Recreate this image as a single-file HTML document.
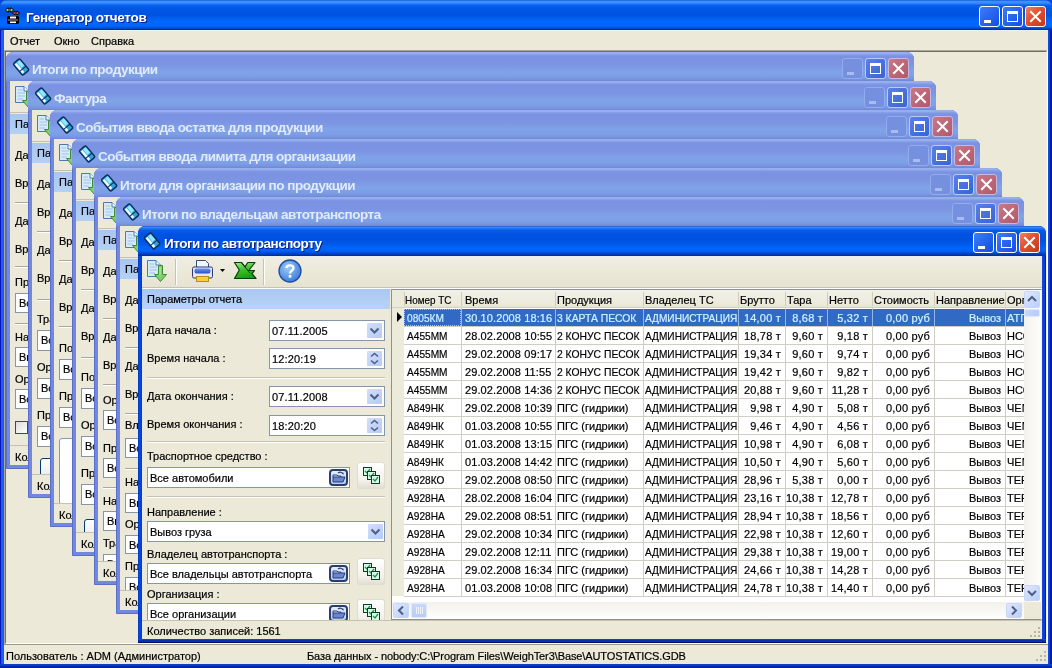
<!DOCTYPE html><html><head><meta charset="utf-8"><title>Генератор отчетов</title><style>
*{box-sizing:border-box;margin:0;padding:0}
html,body{will-change:transform;width:1052px;height:668px;overflow:hidden;background:#ECE9D8;font-family:"Liberation Sans", sans-serif;font-size:11px;color:#000}
.a{position:absolute}
.t{position:absolute;white-space:nowrap;line-height:13px;-webkit-text-stroke:0.2px currentColor}
.fld{position:absolute;background:#fff;border:1px solid #8496A8;overflow:hidden}
.sep{position:absolute;height:2px;border-top:1px solid #ACA899;border-bottom:1px solid #fff}
.tb{position:absolute;border-radius:3px;border:1px solid #fff;width:21px;height:21px}
.cap{position:absolute;white-space:nowrap;font-weight:bold;font-size:13px;line-height:16px;color:#fff}
</style></head><body>
<div class="a" style="left:0;top:0;width:1052px;height:668px;background:#0846D8"></div>
<div class="a" style="left:0;top:0;width:1052px;height:30px;border-radius:7px 7px 0 0;background:linear-gradient(to bottom,#0A4AC8 0px,#3A92FF 1px,#3A8EFF 3px,#0A64F0 5px,#0058E6 8px,#0052E0 15px,#005EEE 18px,#0068FF 22px,#0066FC 26px,#0050DC 28px,#0030A8 29.5px,#002A98 30px)"></div>
<div class="a" style="left:0;top:30px;width:4px;height:638px;background:linear-gradient(to right,#0818B8 0px,#0818B8 1px,#1A5CFA 1px,#1A5CFA 3px,#2A58D0 3px)"></div>
<div class="a" style="left:1048px;top:30px;width:4px;height:638px;background:linear-gradient(to right,#0A48E0 0px,#0A48E0 2px,#0418A0 2px)"></div>
<div class="a" style="left:0;top:664px;width:1052px;height:4px;background:linear-gradient(to bottom,#0840C8 0px,#0840C8 2px,#0424A8 2px)"></div>
<svg class="a" style="left:5px;top:6px" width="16" height="18" viewBox="0 0 16 18">
<path d="M0.5 4 L3 1.5 V3 H6 V1.5 L8.5 4 L6 6.5 V5 H3 V6.5 Z" fill="#8CE070" stroke="#000" stroke-width="1"/>
<path d="M7.5 7 L9.5 5 V6 H12 V5 L14.5 7 L12 9 V8 H9.5 V9 Z" fill="#F05050" stroke="#000" stroke-width="1"/>
<path d="M3 10 H13 L14 11 V17 L13 18 H3 L2 17 V11 Z" fill="#000"/>
<rect x="5" y="10.5" width="6" height="2" fill="#fff"/>
<rect x="3" y="13.5" width="10" height="1" fill="#B89898"/>
<rect x="5" y="15.5" width="6" height="1.6" fill="#fff"/>
</svg>
<div class="cap" style="left:26px;top:10px;font-size:13.5px;letter-spacing:-0.28px;text-shadow:1px 1px 0 #0A1E80">Генератор отчетов</div>
<div class="tb" style="left:979px;top:6px;background:linear-gradient(135deg,#3C7EF8 0%,#2A66F0 45%,#1050E0 100%);border-color:#fff"><div class="a" style="left:4px;top:13px;width:7px;height:3px;background:#fff"></div></div><div class="tb" style="left:1002px;top:6px;background:linear-gradient(135deg,#3C7EF8 0%,#2A66F0 45%,#1050E0 100%);border-color:#fff"><div class="a" style="left:4px;top:4px;width:11px;height:11px;border:1px solid #fff;border-top-width:3px"></div></div><div class="tb" style="left:1025px;top:6px;background:linear-gradient(135deg,#F08060 0%,#E05030 45%,#C83818 100%);border-color:#fff"><svg class="a" style="left:0;top:0" width="19" height="19"><path d="M5 5 L14 14 M14 5 L5 14" stroke="#fff" stroke-width="2" stroke-linecap="square"/></svg></div>
<div class="a" style="left:4px;top:30px;width:1044px;height:20px;background:linear-gradient(#EEF2F8 0px,#EEF2F8 1px,#ECE9D8 1px)"></div>
<div class="t" style="left:10px;top:35px">Отчет</div>
<div class="t" style="left:54px;top:35px">Окно</div>
<div class="t" style="left:91px;top:35px">Справка</div>
<div class="a" style="left:4px;top:50px;width:1044px;height:595px;background:#ECE9D8;border-top:1px solid #ACA899;border-left:1px solid #ACA899;border-right:2px solid #fff;border-bottom:1px solid #fff"></div>
<div class="a" style="left:5px;top:51px;width:1042px;height:593px;border-top:1px solid #716F64;border-left:1px solid #716F64;border-right:1px solid #F1EFE2;border-bottom:1px solid #FFFFFF"></div>
<div class="a" style="left:4px;top:644px;width:1044px;height:20px;background:#ECE9D8;border-top:1px solid #9C9884"></div>
<div class="t" style="left:6px;top:650px">Пользователь : ADM (Администратор)</div>
<div class="t" style="left:307px;top:650px;letter-spacing:-0.1px">База данных - nobody:C:\Program Files\WeighTer3\Base\AUTOSTATICS.GDB</div>
<div class="a" style="left:1044px;top:651px;width:2px;height:2px;background:#B8B5A6"></div><div class="a" style="left:1040px;top:655px;width:2px;height:2px;background:#B8B5A6"></div><div class="a" style="left:1044px;top:655px;width:2px;height:2px;background:#B8B5A6"></div><div class="a" style="left:1036px;top:659px;width:2px;height:2px;background:#B8B5A6"></div><div class="a" style="left:1040px;top:659px;width:2px;height:2px;background:#B8B5A6"></div><div class="a" style="left:1044px;top:659px;width:2px;height:2px;background:#B8B5A6"></div>
<div class="a" style="left:6px;top:52px;width:908px;height:417px;overflow:hidden">
<div class="a" style="left:0;top:0;width:908px;height:417px;background:#7288E0;border-radius:7px 7px 0 0;border:1px solid #5A70C8"></div>
<div class="a" style="left:0;top:0;width:908px;height:30px;border-radius:7px 7px 0 0;background:linear-gradient(to bottom,#8CA6EC 0px,#9DB9F0 1px,#8CA4EA 2px,#7B92E2 4px,#7C94E2 12px,#7FA2E8 19px,#7CA0E6 24px,#7A94E0 27px,#6E88D4 29px)"></div>
<svg class="a" style="left:6px;top:6px" width="18" height="18" viewBox="0 0 18 18">
<g transform="rotate(-40 9 9)">
<rect x="4.8" y="1.5" width="8.6" height="15" rx="1.5" fill="#30A4D8" stroke="#0E2A5A" stroke-width="1.4"/>
<rect x="5.8" y="3" width="2.4" height="12" fill="#F0FCFF"/>
<rect x="8.8" y="3" width="3.6" height="7" fill="#90E6FA"/>
<path d="M4.8 11.5 H13.4" stroke="#0E2A5A" stroke-width="1.1"/>
</g></svg>
<div class="cap" style="left:26px;top:10px;font-size:13.5px;letter-spacing:-0.5px;color:#E2EAFB">Итоги по продукции</div>
<div class="tb" style="left:836px;top:6px;background:#7690E0;border-color:#93ACEE"><div class="a" style="left:4px;top:13px;width:7px;height:3px;background:#A8BCF0"></div></div><div class="tb" style="left:859px;top:6px;background:linear-gradient(135deg,#5A80E8,#3A62D8);border-color:#B8CCF8"><div class="a" style="left:4px;top:4px;width:11px;height:11px;border:1px solid #fff;border-top-width:3px"></div></div><div class="tb" style="left:882px;top:6px;background:linear-gradient(135deg,#C87888,#B05868);border-color:#C8B8E0"><svg class="a" style="left:0;top:0" width="19" height="19"><path d="M5 5 L14 14 M14 5 L5 14" stroke="#fff" stroke-width="2" stroke-linecap="square"/></svg></div>
<div class="a" style="left:4px;top:29px;width:900px;height:384px;background:#ECE9D8;overflow:hidden">
<svg class="a" style="left:4px;top:4px" width="24" height="25" viewBox="0 0 24 25">
<path d="M1.5 1.5 H10 L14.5 6 V17.5 H1.5 Z" fill="#D8EAFA" stroke="#4A7AB0"/>
<path d="M10 1.5 V6 H14.5" fill="#F4FAFF" stroke="#4A7AB0"/>
<path d="M3.5 5 H8 M3.5 8 H11 M3.5 11 H11 M3.5 14 H9" stroke="#9CC4E8"/>
<path d="M12.5 6.5 H16.5 V15.5 H20.5 L14.5 22.5 L8.5 15.5 H12.5 Z" fill="#80D070" stroke="#3C8A34"/>
</svg><div class="a" style="left:0px;top:31px;width:248px;height:1px;background:#C5C2B2"></div><div class="a" style="left:0px;top:33px;width:248px;height:20px;background:linear-gradient(#A8C6F0,#B4D0F4)"></div><div class="t" style="left:5px;top:37px">Параметры отчета</div><div class="t" style="left:5px;top:67.5px">Дата начала :</div><div class="fld" style="left:127px;top:64px;width:116px;height:21px"><div class=t style=left:3px;top:3px>07.11.2005</div></div><div class="t" style="left:5px;top:95.5px">Время начала :</div><div class="fld" style="left:127px;top:92px;width:116px;height:20px"><div class=t style=left:3px;top:3px>12:20:19</div></div><div class="sep" style="left:5px;top:121px;width:239px"></div><div class="t" style="left:5px;top:133.5px">Дата окончания :</div><div class="fld" style="left:127px;top:130px;width:116px;height:21px"><div class=t style=left:3px;top:3px>07.11.2008</div></div><div class="t" style="left:5px;top:162px">Время окончания :</div><div class="fld" style="left:127px;top:159px;width:116px;height:20px"><div class=t style=left:3px;top:3px>18:20:20</div></div><div class="sep" style="left:5px;top:185px;width:239px"></div><div class="t" style="left:5px;top:195px">Продукция :</div><div class="fld" style="left:5px;top:212px;width:202px;height:20px"><div class=t style=left:3px;top:3px>Все</div></div><div class="sep" style="left:5px;top:242px;width:239px"></div><div class="t" style="left:5px;top:250px">Направление :</div><div class="fld" style="left:5px;top:266px;width:202px;height:20px"><div class=t style=left:3px;top:3px>Вывоз груза</div></div><div class="t" style="left:5px;top:292px">Организация :</div><div class="fld" style="left:5px;top:308px;width:202px;height:20px"><div class=t style=left:3px;top:3px>Все</div></div><div class="a" style="left:5px;top:340px;width:13px;height:13px;border:1px solid #1C5180;background:linear-gradient(135deg,#DCDCD7,#fff)"></div>
<div class="a" style="left:0;top:364px;width:900px;height:20px;background:#ECE9D8;border-top:1px solid #C5C2B2"></div>
<div class="t" style="left:5px;top:370px">Количество записей: 1561</div>
</div>
</div>
<div class="a" style="left:28px;top:81px;width:908px;height:417px;overflow:hidden">
<div class="a" style="left:0;top:0;width:908px;height:417px;background:#7288E0;border-radius:7px 7px 0 0;border:1px solid #5A70C8"></div>
<div class="a" style="left:0;top:0;width:908px;height:30px;border-radius:7px 7px 0 0;background:linear-gradient(to bottom,#8CA6EC 0px,#9DB9F0 1px,#8CA4EA 2px,#7B92E2 4px,#7C94E2 12px,#7FA2E8 19px,#7CA0E6 24px,#7A94E0 27px,#6E88D4 29px)"></div>
<svg class="a" style="left:6px;top:6px" width="18" height="18" viewBox="0 0 18 18">
<g transform="rotate(-40 9 9)">
<rect x="4.8" y="1.5" width="8.6" height="15" rx="1.5" fill="#30A4D8" stroke="#0E2A5A" stroke-width="1.4"/>
<rect x="5.8" y="3" width="2.4" height="12" fill="#F0FCFF"/>
<rect x="8.8" y="3" width="3.6" height="7" fill="#90E6FA"/>
<path d="M4.8 11.5 H13.4" stroke="#0E2A5A" stroke-width="1.1"/>
</g></svg>
<div class="cap" style="left:26px;top:10px;font-size:13.5px;letter-spacing:-0.5px;color:#E2EAFB">Фактура</div>
<div class="tb" style="left:836px;top:6px;background:#7690E0;border-color:#93ACEE"><div class="a" style="left:4px;top:13px;width:7px;height:3px;background:#A8BCF0"></div></div><div class="tb" style="left:859px;top:6px;background:linear-gradient(135deg,#5A80E8,#3A62D8);border-color:#B8CCF8"><div class="a" style="left:4px;top:4px;width:11px;height:11px;border:1px solid #fff;border-top-width:3px"></div></div><div class="tb" style="left:882px;top:6px;background:linear-gradient(135deg,#C87888,#B05868);border-color:#C8B8E0"><svg class="a" style="left:0;top:0" width="19" height="19"><path d="M5 5 L14 14 M14 5 L5 14" stroke="#fff" stroke-width="2" stroke-linecap="square"/></svg></div>
<div class="a" style="left:4px;top:29px;width:900px;height:384px;background:#ECE9D8;overflow:hidden">
<svg class="a" style="left:4px;top:4px" width="24" height="25" viewBox="0 0 24 25">
<path d="M1.5 1.5 H10 L14.5 6 V17.5 H1.5 Z" fill="#D8EAFA" stroke="#4A7AB0"/>
<path d="M10 1.5 V6 H14.5" fill="#F4FAFF" stroke="#4A7AB0"/>
<path d="M3.5 5 H8 M3.5 8 H11 M3.5 11 H11 M3.5 14 H9" stroke="#9CC4E8"/>
<path d="M12.5 6.5 H16.5 V15.5 H20.5 L14.5 22.5 L8.5 15.5 H12.5 Z" fill="#80D070" stroke="#3C8A34"/>
</svg><div class="a" style="left:0px;top:31px;width:248px;height:1px;background:#C5C2B2"></div><div class="a" style="left:0px;top:33px;width:248px;height:20px;background:linear-gradient(#A8C6F0,#B4D0F4)"></div><div class="t" style="left:5px;top:37px">Параметры отчета</div><div class="t" style="left:5px;top:67.5px">Дата начала :</div><div class="fld" style="left:127px;top:64px;width:116px;height:21px"><div class=t style=left:3px;top:3px>07.11.2005</div></div><div class="t" style="left:5px;top:95.5px">Время начала :</div><div class="fld" style="left:127px;top:92px;width:116px;height:20px"><div class=t style=left:3px;top:3px>12:20:19</div></div><div class="sep" style="left:5px;top:121px;width:239px"></div><div class="t" style="left:5px;top:133.5px">Дата окончания :</div><div class="fld" style="left:127px;top:130px;width:116px;height:21px"><div class=t style=left:3px;top:3px>07.11.2008</div></div><div class="t" style="left:5px;top:162px">Время окончания :</div><div class="fld" style="left:127px;top:159px;width:116px;height:20px"><div class=t style=left:3px;top:3px>18:20:20</div></div><div class="sep" style="left:5px;top:189px;width:239px"></div><div class="t" style="left:5px;top:203px">Траспортное средство :</div><div class="fld" style="left:5px;top:220px;width:202px;height:21px"><div class=t style=left:3px;top:3px>Все</div></div><div class="t" style="left:5px;top:251px">Организация :</div><div class="fld" style="left:5px;top:268px;width:202px;height:21px"><div class=t style=left:3px;top:3px>Все</div></div><div class="t" style="left:5px;top:299px">Продукция :</div><div class="fld" style="left:5px;top:316px;width:202px;height:21px"><div class=t style=left:3px;top:3px>Все</div></div><div class="a" style="left:8px;top:348px;width:60px;height:20px;border:1px solid #003C74;border-radius:3px;background:linear-gradient(#fff,#ECEBE6)"></div>
<div class="a" style="left:0;top:364px;width:900px;height:20px;background:#ECE9D8;border-top:1px solid #C5C2B2"></div>
<div class="t" style="left:5px;top:370px">Количество записей: 1561</div>
</div>
</div>
<div class="a" style="left:50px;top:110px;width:908px;height:417px;overflow:hidden">
<div class="a" style="left:0;top:0;width:908px;height:417px;background:#7288E0;border-radius:7px 7px 0 0;border:1px solid #5A70C8"></div>
<div class="a" style="left:0;top:0;width:908px;height:30px;border-radius:7px 7px 0 0;background:linear-gradient(to bottom,#8CA6EC 0px,#9DB9F0 1px,#8CA4EA 2px,#7B92E2 4px,#7C94E2 12px,#7FA2E8 19px,#7CA0E6 24px,#7A94E0 27px,#6E88D4 29px)"></div>
<svg class="a" style="left:6px;top:6px" width="18" height="18" viewBox="0 0 18 18">
<g transform="rotate(-40 9 9)">
<rect x="4.8" y="1.5" width="8.6" height="15" rx="1.5" fill="#30A4D8" stroke="#0E2A5A" stroke-width="1.4"/>
<rect x="5.8" y="3" width="2.4" height="12" fill="#F0FCFF"/>
<rect x="8.8" y="3" width="3.6" height="7" fill="#90E6FA"/>
<path d="M4.8 11.5 H13.4" stroke="#0E2A5A" stroke-width="1.1"/>
</g></svg>
<div class="cap" style="left:26px;top:10px;font-size:13.5px;letter-spacing:-0.5px;color:#E2EAFB">События ввода остатка для продукции</div>
<div class="tb" style="left:836px;top:6px;background:#7690E0;border-color:#93ACEE"><div class="a" style="left:4px;top:13px;width:7px;height:3px;background:#A8BCF0"></div></div><div class="tb" style="left:859px;top:6px;background:linear-gradient(135deg,#5A80E8,#3A62D8);border-color:#B8CCF8"><div class="a" style="left:4px;top:4px;width:11px;height:11px;border:1px solid #fff;border-top-width:3px"></div></div><div class="tb" style="left:882px;top:6px;background:linear-gradient(135deg,#C87888,#B05868);border-color:#C8B8E0"><svg class="a" style="left:0;top:0" width="19" height="19"><path d="M5 5 L14 14 M14 5 L5 14" stroke="#fff" stroke-width="2" stroke-linecap="square"/></svg></div>
<div class="a" style="left:4px;top:29px;width:900px;height:384px;background:#ECE9D8;overflow:hidden">
<svg class="a" style="left:4px;top:4px" width="24" height="25" viewBox="0 0 24 25">
<path d="M1.5 1.5 H10 L14.5 6 V17.5 H1.5 Z" fill="#D8EAFA" stroke="#4A7AB0"/>
<path d="M10 1.5 V6 H14.5" fill="#F4FAFF" stroke="#4A7AB0"/>
<path d="M3.5 5 H8 M3.5 8 H11 M3.5 11 H11 M3.5 14 H9" stroke="#9CC4E8"/>
<path d="M12.5 6.5 H16.5 V15.5 H20.5 L14.5 22.5 L8.5 15.5 H12.5 Z" fill="#80D070" stroke="#3C8A34"/>
</svg><div class="a" style="left:0px;top:31px;width:248px;height:1px;background:#C5C2B2"></div><div class="a" style="left:0px;top:33px;width:248px;height:20px;background:linear-gradient(#A8C6F0,#B4D0F4)"></div><div class="t" style="left:5px;top:37px">Параметры отчета</div><div class="t" style="left:5px;top:67.5px">Дата начала :</div><div class="fld" style="left:127px;top:64px;width:116px;height:21px"><div class=t style=left:3px;top:3px>07.11.2005</div></div><div class="t" style="left:5px;top:95.5px">Время начала :</div><div class="fld" style="left:127px;top:92px;width:116px;height:20px"><div class=t style=left:3px;top:3px>12:20:19</div></div><div class="sep" style="left:5px;top:121px;width:239px"></div><div class="t" style="left:5px;top:133.5px">Дата окончания :</div><div class="fld" style="left:127px;top:130px;width:116px;height:21px"><div class=t style=left:3px;top:3px>07.11.2008</div></div><div class="t" style="left:5px;top:162px">Время окончания :</div><div class="fld" style="left:127px;top:159px;width:116px;height:20px"><div class=t style=left:3px;top:3px>18:20:20</div></div><div class="sep" style="left:5px;top:187px;width:239px"></div><div class="t" style="left:5px;top:203px">Получатель :</div><div class="fld" style="left:5px;top:220px;width:202px;height:21px"><div class=t style=left:3px;top:3px>Все</div></div><div class="t" style="left:5px;top:251px">Продукция :</div><div class="fld" style="left:5px;top:268px;width:202px;height:21px"><div class=t style=left:3px;top:3px>Все</div></div><div class="a" style="left:5px;top:299px;width:200px;height:67px;border:1px solid #7F9DB9;border-radius:3px;background:#fff"></div>
<div class="a" style="left:0;top:364px;width:900px;height:20px;background:#ECE9D8;border-top:1px solid #C5C2B2"></div>
<div class="t" style="left:5px;top:370px">Количество записей: 1561</div>
</div>
</div>
<div class="a" style="left:72px;top:139px;width:908px;height:417px;overflow:hidden">
<div class="a" style="left:0;top:0;width:908px;height:417px;background:#7288E0;border-radius:7px 7px 0 0;border:1px solid #5A70C8"></div>
<div class="a" style="left:0;top:0;width:908px;height:30px;border-radius:7px 7px 0 0;background:linear-gradient(to bottom,#8CA6EC 0px,#9DB9F0 1px,#8CA4EA 2px,#7B92E2 4px,#7C94E2 12px,#7FA2E8 19px,#7CA0E6 24px,#7A94E0 27px,#6E88D4 29px)"></div>
<svg class="a" style="left:6px;top:6px" width="18" height="18" viewBox="0 0 18 18">
<g transform="rotate(-40 9 9)">
<rect x="4.8" y="1.5" width="8.6" height="15" rx="1.5" fill="#30A4D8" stroke="#0E2A5A" stroke-width="1.4"/>
<rect x="5.8" y="3" width="2.4" height="12" fill="#F0FCFF"/>
<rect x="8.8" y="3" width="3.6" height="7" fill="#90E6FA"/>
<path d="M4.8 11.5 H13.4" stroke="#0E2A5A" stroke-width="1.1"/>
</g></svg>
<div class="cap" style="left:26px;top:10px;font-size:13.5px;letter-spacing:-0.5px;color:#E2EAFB">События ввода лимита для организации</div>
<div class="tb" style="left:836px;top:6px;background:#7690E0;border-color:#93ACEE"><div class="a" style="left:4px;top:13px;width:7px;height:3px;background:#A8BCF0"></div></div><div class="tb" style="left:859px;top:6px;background:linear-gradient(135deg,#5A80E8,#3A62D8);border-color:#B8CCF8"><div class="a" style="left:4px;top:4px;width:11px;height:11px;border:1px solid #fff;border-top-width:3px"></div></div><div class="tb" style="left:882px;top:6px;background:linear-gradient(135deg,#C87888,#B05868);border-color:#C8B8E0"><svg class="a" style="left:0;top:0" width="19" height="19"><path d="M5 5 L14 14 M14 5 L5 14" stroke="#fff" stroke-width="2" stroke-linecap="square"/></svg></div>
<div class="a" style="left:4px;top:29px;width:900px;height:384px;background:#ECE9D8;overflow:hidden">
<svg class="a" style="left:4px;top:4px" width="24" height="25" viewBox="0 0 24 25">
<path d="M1.5 1.5 H10 L14.5 6 V17.5 H1.5 Z" fill="#D8EAFA" stroke="#4A7AB0"/>
<path d="M10 1.5 V6 H14.5" fill="#F4FAFF" stroke="#4A7AB0"/>
<path d="M3.5 5 H8 M3.5 8 H11 M3.5 11 H11 M3.5 14 H9" stroke="#9CC4E8"/>
<path d="M12.5 6.5 H16.5 V15.5 H20.5 L14.5 22.5 L8.5 15.5 H12.5 Z" fill="#80D070" stroke="#3C8A34"/>
</svg><div class="a" style="left:0px;top:31px;width:248px;height:1px;background:#C5C2B2"></div><div class="a" style="left:0px;top:33px;width:248px;height:20px;background:linear-gradient(#A8C6F0,#B4D0F4)"></div><div class="t" style="left:5px;top:37px">Параметры отчета</div><div class="t" style="left:5px;top:67.5px">Дата начала :</div><div class="fld" style="left:127px;top:64px;width:116px;height:21px"><div class=t style=left:3px;top:3px>07.11.2005</div></div><div class="t" style="left:5px;top:95.5px">Время начала :</div><div class="fld" style="left:127px;top:92px;width:116px;height:20px"><div class=t style=left:3px;top:3px>12:20:19</div></div><div class="sep" style="left:5px;top:121px;width:239px"></div><div class="t" style="left:5px;top:133.5px">Дата окончания :</div><div class="fld" style="left:127px;top:130px;width:116px;height:21px"><div class=t style=left:3px;top:3px>07.11.2008</div></div><div class="t" style="left:5px;top:162px">Время окончания :</div><div class="fld" style="left:127px;top:159px;width:116px;height:20px"><div class=t style=left:3px;top:3px>18:20:20</div></div><div class="sep" style="left:5px;top:189px;width:239px"></div><div class="t" style="left:5px;top:203px">Получатель :</div><div class="fld" style="left:5px;top:220px;width:202px;height:21px"><div class=t style=left:3px;top:3px>Все</div></div><div class="t" style="left:5px;top:251px">Организация :</div><div class="fld" style="left:5px;top:268px;width:202px;height:21px"><div class=t style=left:3px;top:3px>Все</div></div><div class="t" style="left:5px;top:299px">Продукция :</div><div class="fld" style="left:5px;top:316px;width:202px;height:21px"><div class=t style=left:3px;top:3px>Все</div></div><div class="a" style="left:8px;top:351px;width:60px;height:19px;border:1px solid #003C74;border-radius:3px;background:linear-gradient(#fff,#ECEBE6)"></div>
<div class="a" style="left:0;top:364px;width:900px;height:20px;background:#ECE9D8;border-top:1px solid #C5C2B2"></div>
<div class="t" style="left:5px;top:370px">Количество записей: 1561</div>
</div>
</div>
<div class="a" style="left:94px;top:168px;width:908px;height:417px;overflow:hidden">
<div class="a" style="left:0;top:0;width:908px;height:417px;background:#7288E0;border-radius:7px 7px 0 0;border:1px solid #5A70C8"></div>
<div class="a" style="left:0;top:0;width:908px;height:30px;border-radius:7px 7px 0 0;background:linear-gradient(to bottom,#8CA6EC 0px,#9DB9F0 1px,#8CA4EA 2px,#7B92E2 4px,#7C94E2 12px,#7FA2E8 19px,#7CA0E6 24px,#7A94E0 27px,#6E88D4 29px)"></div>
<svg class="a" style="left:6px;top:6px" width="18" height="18" viewBox="0 0 18 18">
<g transform="rotate(-40 9 9)">
<rect x="4.8" y="1.5" width="8.6" height="15" rx="1.5" fill="#30A4D8" stroke="#0E2A5A" stroke-width="1.4"/>
<rect x="5.8" y="3" width="2.4" height="12" fill="#F0FCFF"/>
<rect x="8.8" y="3" width="3.6" height="7" fill="#90E6FA"/>
<path d="M4.8 11.5 H13.4" stroke="#0E2A5A" stroke-width="1.1"/>
</g></svg>
<div class="cap" style="left:26px;top:10px;font-size:13.5px;letter-spacing:-0.5px;color:#E2EAFB">Итоги для организации по продукции</div>
<div class="tb" style="left:836px;top:6px;background:#7690E0;border-color:#93ACEE"><div class="a" style="left:4px;top:13px;width:7px;height:3px;background:#A8BCF0"></div></div><div class="tb" style="left:859px;top:6px;background:linear-gradient(135deg,#5A80E8,#3A62D8);border-color:#B8CCF8"><div class="a" style="left:4px;top:4px;width:11px;height:11px;border:1px solid #fff;border-top-width:3px"></div></div><div class="tb" style="left:882px;top:6px;background:linear-gradient(135deg,#C87888,#B05868);border-color:#C8B8E0"><svg class="a" style="left:0;top:0" width="19" height="19"><path d="M5 5 L14 14 M14 5 L5 14" stroke="#fff" stroke-width="2" stroke-linecap="square"/></svg></div>
<div class="a" style="left:4px;top:29px;width:900px;height:384px;background:#ECE9D8;overflow:hidden">
<svg class="a" style="left:4px;top:4px" width="24" height="25" viewBox="0 0 24 25">
<path d="M1.5 1.5 H10 L14.5 6 V17.5 H1.5 Z" fill="#D8EAFA" stroke="#4A7AB0"/>
<path d="M10 1.5 V6 H14.5" fill="#F4FAFF" stroke="#4A7AB0"/>
<path d="M3.5 5 H8 M3.5 8 H11 M3.5 11 H11 M3.5 14 H9" stroke="#9CC4E8"/>
<path d="M12.5 6.5 H16.5 V15.5 H20.5 L14.5 22.5 L8.5 15.5 H12.5 Z" fill="#80D070" stroke="#3C8A34"/>
</svg><div class="a" style="left:0px;top:31px;width:248px;height:1px;background:#C5C2B2"></div><div class="a" style="left:0px;top:33px;width:248px;height:20px;background:linear-gradient(#A8C6F0,#B4D0F4)"></div><div class="t" style="left:5px;top:37px">Параметры отчета</div><div class="t" style="left:5px;top:67.5px">Дата начала :</div><div class="fld" style="left:127px;top:64px;width:116px;height:21px"><div class=t style=left:3px;top:3px>07.11.2005</div></div><div class="t" style="left:5px;top:95.5px">Время начала :</div><div class="fld" style="left:127px;top:92px;width:116px;height:20px"><div class=t style=left:3px;top:3px>12:20:19</div></div><div class="sep" style="left:5px;top:121px;width:239px"></div><div class="t" style="left:5px;top:133.5px">Дата окончания :</div><div class="fld" style="left:127px;top:130px;width:116px;height:21px"><div class=t style=left:3px;top:3px>07.11.2008</div></div><div class="t" style="left:5px;top:162px">Время окончания :</div><div class="fld" style="left:127px;top:159px;width:116px;height:20px"><div class=t style=left:3px;top:3px>18:20:20</div></div><div class="sep" style="left:5px;top:187px;width:239px"></div><div class="t" style="left:5px;top:197px">Организация :</div><div class="fld" style="left:5px;top:213px;width:202px;height:20px"><div class=t style=left:3px;top:3px>Все</div></div><div class="t" style="left:5px;top:245px">Продукция :</div><div class="fld" style="left:5px;top:261px;width:202px;height:20px"><div class=t style=left:3px;top:3px>Все</div></div><div class="sep" style="left:5px;top:290px;width:239px"></div><div class="t" style="left:5px;top:298px">Направление :</div><div class="fld" style="left:5px;top:314px;width:202px;height:20px"><div class=t style=left:3px;top:3px>Вывоз груза</div></div><div class="t" style="left:5px;top:340px">Траспортное средство :</div><div class="fld" style="left:5px;top:357px;width:202px;height:20px"><div class=t style=left:3px;top:3px>Все</div></div>
<div class="a" style="left:0;top:364px;width:900px;height:20px;background:#ECE9D8;border-top:1px solid #C5C2B2"></div>
<div class="t" style="left:5px;top:370px">Количество записей: 1561</div>
</div>
</div>
<div class="a" style="left:116px;top:197px;width:908px;height:417px;overflow:hidden">
<div class="a" style="left:0;top:0;width:908px;height:417px;background:#7288E0;border-radius:7px 7px 0 0;border:1px solid #5A70C8"></div>
<div class="a" style="left:0;top:0;width:908px;height:30px;border-radius:7px 7px 0 0;background:linear-gradient(to bottom,#8CA6EC 0px,#9DB9F0 1px,#8CA4EA 2px,#7B92E2 4px,#7C94E2 12px,#7FA2E8 19px,#7CA0E6 24px,#7A94E0 27px,#6E88D4 29px)"></div>
<svg class="a" style="left:6px;top:6px" width="18" height="18" viewBox="0 0 18 18">
<g transform="rotate(-40 9 9)">
<rect x="4.8" y="1.5" width="8.6" height="15" rx="1.5" fill="#30A4D8" stroke="#0E2A5A" stroke-width="1.4"/>
<rect x="5.8" y="3" width="2.4" height="12" fill="#F0FCFF"/>
<rect x="8.8" y="3" width="3.6" height="7" fill="#90E6FA"/>
<path d="M4.8 11.5 H13.4" stroke="#0E2A5A" stroke-width="1.1"/>
</g></svg>
<div class="cap" style="left:26px;top:10px;font-size:13.5px;letter-spacing:-0.5px;color:#E2EAFB">Итоги по владельцам автотранспорта</div>
<div class="tb" style="left:836px;top:6px;background:#7690E0;border-color:#93ACEE"><div class="a" style="left:4px;top:13px;width:7px;height:3px;background:#A8BCF0"></div></div><div class="tb" style="left:859px;top:6px;background:linear-gradient(135deg,#5A80E8,#3A62D8);border-color:#B8CCF8"><div class="a" style="left:4px;top:4px;width:11px;height:11px;border:1px solid #fff;border-top-width:3px"></div></div><div class="tb" style="left:882px;top:6px;background:linear-gradient(135deg,#C87888,#B05868);border-color:#C8B8E0"><svg class="a" style="left:0;top:0" width="19" height="19"><path d="M5 5 L14 14 M14 5 L5 14" stroke="#fff" stroke-width="2" stroke-linecap="square"/></svg></div>
<div class="a" style="left:4px;top:29px;width:900px;height:384px;background:#ECE9D8;overflow:hidden">
<svg class="a" style="left:4px;top:4px" width="24" height="25" viewBox="0 0 24 25">
<path d="M1.5 1.5 H10 L14.5 6 V17.5 H1.5 Z" fill="#D8EAFA" stroke="#4A7AB0"/>
<path d="M10 1.5 V6 H14.5" fill="#F4FAFF" stroke="#4A7AB0"/>
<path d="M3.5 5 H8 M3.5 8 H11 M3.5 11 H11 M3.5 14 H9" stroke="#9CC4E8"/>
<path d="M12.5 6.5 H16.5 V15.5 H20.5 L14.5 22.5 L8.5 15.5 H12.5 Z" fill="#80D070" stroke="#3C8A34"/>
</svg><div class="a" style="left:0px;top:31px;width:248px;height:1px;background:#C5C2B2"></div><div class="a" style="left:0px;top:33px;width:248px;height:20px;background:linear-gradient(#A8C6F0,#B4D0F4)"></div><div class="t" style="left:5px;top:37px">Параметры отчета</div><div class="t" style="left:5px;top:67.5px">Дата начала :</div><div class="fld" style="left:127px;top:64px;width:116px;height:21px"><div class=t style=left:3px;top:3px>07.11.2005</div></div><div class="t" style="left:5px;top:95.5px">Время начала :</div><div class="fld" style="left:127px;top:92px;width:116px;height:20px"><div class=t style=left:3px;top:3px>12:20:19</div></div><div class="sep" style="left:5px;top:121px;width:239px"></div><div class="t" style="left:5px;top:133.5px">Дата окончания :</div><div class="fld" style="left:127px;top:130px;width:116px;height:21px"><div class=t style=left:3px;top:3px>07.11.2008</div></div><div class="t" style="left:5px;top:162px">Время окончания :</div><div class="fld" style="left:127px;top:159px;width:116px;height:20px"><div class=t style=left:3px;top:3px>18:20:20</div></div><div class="sep" style="left:5px;top:187px;width:239px"></div><div class="t" style="left:5px;top:193px">Владелец автотранспорта :</div><div class="fld" style="left:5px;top:212px;width:202px;height:20px"><div class=t style=left:3px;top:3px>Все</div></div><div class="sep" style="left:5px;top:242px;width:239px"></div><div class="t" style="left:5px;top:250px">Направление :</div><div class="fld" style="left:5px;top:267px;width:202px;height:20px"><div class=t style=left:3px;top:3px>Вывоз груза</div></div><div class="t" style="left:5px;top:292px">Организация :</div><div class="fld" style="left:5px;top:309px;width:202px;height:19px"><div class=t style=left:3px;top:3px>Все</div></div><div class="t" style="left:5px;top:334px">Продукция :</div><div class="fld" style="left:5px;top:351px;width:202px;height:20px"><div class=t style=left:3px;top:3px>Все</div></div>
<div class="a" style="left:0;top:364px;width:900px;height:20px;background:#ECE9D8;border-top:1px solid #C5C2B2"></div>
<div class="t" style="left:5px;top:370px">Количество записей: 1561</div>
</div>
</div>
<div class="a" style="left:138px;top:226px;width:908px;height:417px;overflow:hidden">
<div class="a" style="left:0;top:0;width:908px;height:417px;background:linear-gradient(to right,#0A30A8,#0848E0 1px,#0044D8 3px,#0838C0 4px);border-radius:7px 7px 0 0"></div>
<div class="a" style="left:904px;top:30px;width:4px;height:387px;background:linear-gradient(to right,#1A48D8 0px,#1A48D8 1px,#0840E0 1px,#0840E0 3px,#001C80 3px)"></div>
<div class="a" style="left:0;top:413px;width:908px;height:4px;background:linear-gradient(to bottom,#1A40C8 0px,#1A40C8 1px,#0A30B0 1px,#0A30B0 3px,#000A70 3px)"></div>
<div class="a" style="left:0;top:0;width:908px;height:30px;border-radius:7px 7px 0 0;background:linear-gradient(to bottom,#0A3FB8 0px,#3D95FF 1px,#2A7AF8 2px,#0A5DEB 4px,#0052E2 8px,#0050DE 14px,#005CEC 19px,#0066FC 22px,#0060F4 25px,#0048D8 27px,#0034A8 29px,#002C90 30px)"></div>
<svg class="a" style="left:5px;top:6px" width="18" height="18" viewBox="0 0 18 18">
<g transform="rotate(-40 9 9)">
<rect x="4.8" y="1.5" width="8.6" height="15" rx="1.5" fill="#30A4D8" stroke="#0E2A5A" stroke-width="1.4"/>
<rect x="5.8" y="3" width="2.4" height="12" fill="#F0FCFF"/>
<rect x="8.8" y="3" width="3.6" height="7" fill="#90E6FA"/>
<path d="M4.8 11.5 H13.4" stroke="#0E2A5A" stroke-width="1.1"/>
</g></svg>
<div class="cap" style="left:26px;top:10px;font-size:13.5px;letter-spacing:-0.5px;text-shadow:1px 1px 0 #0A1E80">Итоги по автотранспорту</div>
<div class="tb" style="left:835px;top:6px;background:linear-gradient(135deg,#3C7EF8 0%,#2A66F0 45%,#1050E0 100%);border-color:#fff"><div class="a" style="left:4px;top:13px;width:7px;height:3px;background:#fff"></div></div><div class="tb" style="left:858px;top:6px;background:linear-gradient(135deg,#3C7EF8 0%,#2A66F0 45%,#1050E0 100%);border-color:#fff"><div class="a" style="left:4px;top:4px;width:11px;height:11px;border:1px solid #fff;border-top-width:3px"></div></div><div class="tb" style="left:881px;top:6px;background:linear-gradient(135deg,#F08060 0%,#E05030 45%,#C83818 100%);border-color:#fff"><svg class="a" style="left:0;top:0" width="19" height="19"><path d="M5 5 L14 14 M14 5 L5 14" stroke="#fff" stroke-width="2" stroke-linecap="square"/></svg></div>
<div class="a" style="left:4px;top:30px;width:900px;height:383px;background:#ECE9D8"></div>
<div class="a" style="left:4px;top:30px;width:900px;height:31px;background:linear-gradient(#F0EEE4,#ECE9D8 50%,#E6E3D2)"></div>
<div class="a" style="left:4px;top:30px;width:900px;height:1px;background:#E6EEFA"></div>
<div class="a" style="left:4px;top:61px;width:900px;height:1px;background:#C5C2B2"></div>
<div class="a" style="left:4px;top:62px;width:900px;height:1px;background:#fff"></div>
<div class="a" style="left:37px;top:33px;width:1px;height:26px;background:#C5C2B2"></div>
<div class="a" style="left:38px;top:33px;width:1px;height:26px;background:#fff"></div>
<div class="a" style="left:125px;top:33px;width:1px;height:26px;background:#C5C2B2"></div>
<div class="a" style="left:126px;top:33px;width:1px;height:26px;background:#fff"></div>
<svg class="a" style="left:8px;top:33px" width="24" height="25" viewBox="0 0 24 25"><path d="M1.5 1.5 H10 L14.5 6 V17.5 H1.5 Z" fill="#D8EAFA" stroke="#4A7AB0"/><path d="M10 1.5 V6 H14.5" fill="#F4FAFF" stroke="#4A7AB0"/><path d="M3.5 5 H8 M3.5 8 H11 M3.5 11 H11 M3.5 14 H9" stroke="#9CC4E8"/><path d="M12.5 6.5 H16.5 V15.5 H20.5 L14.5 22.5 L8.5 15.5 H12.5 Z" fill="#80D070" stroke="#3C8A34"/><path d="M14 8 V16" stroke="#B8F0A8" fill="none"/></svg>
<svg class="a" style="left:53px;top:33px" width="24" height="24" viewBox="0 0 24 24"><defs><linearGradient id="pg" x1="0" y1="0" x2="0" y2="1"><stop offset="0" stop-color="#6A98F0"/><stop offset="1" stop-color="#2A50C0"/></linearGradient></defs><path d="M5.5 1.5 H14.5 L17.5 4.5 V8.5 H5.5 Z" fill="#F0F6FF" stroke="#3A4A70"/><rect x="1.5" y="8" width="20" height="11" rx="1.5" fill="#E6E6FA" stroke="#2A3A78"/><rect x="3.5" y="9.5" width="16" height="5" rx="2" fill="url(#pg)"/><rect x="5.5" y="17.5" width="12" height="5" fill="#F4D040" stroke="#B89010"/></svg>
<svg class="a" style="left:82px;top:43px" width="6" height="4"><path d="M0 0 H5 L2.5 3Z" fill="#000"/></svg>
<svg class="a" style="left:90px;top:30px" width="34" height="28" viewBox="0 0 34 28"><defs><linearGradient id="xg" x1="0" y1="0" x2="0.3" y2="1"><stop offset="0" stop-color="#9CF080"/><stop offset="0.5" stop-color="#40C030"/><stop offset="1" stop-color="#18A018"/></linearGradient></defs><path d="M6.5 6.5 H13.5 L17 10.8 L19.8 6.5 H27 L20.8 14.5 H26.5 L24 17.6 L28 22.5 H6.5 L11.3 14 Z" fill="url(#xg)" stroke="#0C3A10" stroke-width="1.2" stroke-linejoin="round"/><path d="M13.5 6.5 L22 17.2" stroke="#0C3A10" stroke-width="1"/></svg>
<svg class="a" style="left:140px;top:33px" width="24" height="24" viewBox="0 0 24 24"><defs><radialGradient id="hg" cx="0.4" cy="0.35" r="0.7"><stop offset="0" stop-color="#9CCBFA"/><stop offset="1" stop-color="#3A78D8"/></radialGradient></defs><circle cx="12" cy="12" r="11" fill="url(#hg)" stroke="#1E4E9E" stroke-width="1.3"/><path d="M8.5 9 C8.5 5.5 15.5 5.5 15.5 9 C15.5 11.5 12 11.5 12 14.5" stroke="#fff" stroke-width="2.4" fill="none"/><rect x="10.7" y="16" width="2.6" height="2.6" fill="#fff"/></svg>
<div class="a" style="left:4px;top:63px;width:248px;height:20px;background:linear-gradient(#A9C7F1,#B8D3F6)"></div>
<div class="t" style="left:9px;top:67px;">Параметры отчета</div>
<div class="t" style="left:9px;top:98px;">Дата начала :</div>
<div class="a" style="left:131px;top:94px;width:116px;height:21px;background:#fff;border:1px solid #8496A8"></div><div class="t" style="left:134px;top:99px;letter-spacing:0.15px">07.11.2005</div>
<div class="a" style="left:229px;top:97px;width:15px;height:15px;background:linear-gradient(135deg,#D2DEFB,#B6CAF6);border-radius:1px"></div><svg class="a" style="left:229px;top:97px" width="15" height="15"><path d="M3.5 5.5 L7.5 9.5 L11.5 5.5" stroke="#4D6185" stroke-width="2" fill="none"/></svg>
<div class="t" style="left:9px;top:126px;">Время начала :</div>
<div class="a" style="left:131px;top:122px;width:116px;height:21px;background:#fff;border:1px solid #8496A8"></div><div class="t" style="left:134px;top:127px;letter-spacing:0.15px">12:20:19</div>
<div class="a" style="left:229px;top:125px;width:15px;height:15px;background:linear-gradient(135deg,#D2DEFB,#B6CAF6);border-radius:1px"></div><svg class="a" style="left:229px;top:125px" width="15" height="15"><path d="M4 5.5 L7.5 2.5 L11 5.5 M4 9.5 L7.5 12.5 L11 9.5" stroke="#4D6185" stroke-width="1.6" fill="none"/></svg>
<div class="a" style="left:9px;top:151px;width:238px;height:1px;background:#C5C2B2"></div>
<div class="a" style="left:9px;top:152px;width:238px;height:1px;background:#fff"></div>
<div class="t" style="left:9px;top:164px;">Дата окончания :</div>
<div class="a" style="left:131px;top:160px;width:116px;height:21px;background:#fff;border:1px solid #8496A8"></div><div class="t" style="left:134px;top:165px;letter-spacing:0.15px">07.11.2008</div>
<div class="a" style="left:229px;top:163px;width:15px;height:15px;background:linear-gradient(135deg,#D2DEFB,#B6CAF6);border-radius:1px"></div><svg class="a" style="left:229px;top:163px" width="15" height="15"><path d="M3.5 5.5 L7.5 9.5 L11.5 5.5" stroke="#4D6185" stroke-width="2" fill="none"/></svg>
<div class="t" style="left:9px;top:192px;">Время окончания :</div>
<div class="a" style="left:131px;top:189px;width:116px;height:21px;background:#fff;border:1px solid #8496A8"></div><div class="t" style="left:134px;top:194px;letter-spacing:0.15px">18:20:20</div>
<div class="a" style="left:229px;top:192px;width:15px;height:15px;background:linear-gradient(135deg,#D2DEFB,#B6CAF6);border-radius:1px"></div><svg class="a" style="left:229px;top:192px" width="15" height="15"><path d="M4 5.5 L7.5 2.5 L11 5.5 M4 9.5 L7.5 12.5 L11 9.5" stroke="#4D6185" stroke-width="1.6" fill="none"/></svg>
<div class="a" style="left:9px;top:215px;width:238px;height:1px;background:#C5C2B2"></div>
<div class="a" style="left:9px;top:216px;width:238px;height:1px;background:#fff"></div>
<div class="t" style="left:9px;top:224px;">Траспортное средство :</div>
<div class="a" style="left:9px;top:241px;width:203px;height:21px;background:#fff;border:1px solid #8496A8"></div><div class="t" style="left:12px;top:246px;">Все автомобили</div>
<div class="a" style="left:191px;top:243px;width:19px;height:17px;background:linear-gradient(#E6EEFF,#B8CCF4);border:2px solid #2A3E70;border-radius:4px"></div><svg class="a" style="left:191px;top:243px" width="19" height="17"><path d="M4 8 V13 H14 L16 8 Z" fill="#6A86D8" stroke="#2A3E70"/><path d="M4 8 V6 H8 L9 7 H12 V8" fill="none" stroke="#2A3E70"/><path d="M9 4 Q12 2 14 5" stroke="#2A3E70" fill="none" stroke-width="1.2"/><path d="M13 4 L15 6 L14 3Z" fill="#2A3E70"/></svg>
<div class="a" style="left:219px;top:236px;width:28px;height:27px;background:linear-gradient(#FFFFFF,#F2F1EA 70%,#E2DFD2);border-radius:3px;border:1px solid #E0DDD0"></div><svg class="a" style="left:225px;top:241px" width="18" height="18"><rect x="0.5" y="0.5" width="8" height="8" fill="#D8F8E8" stroke="#0E3A2A"/><path d="M2 4 L4 6 L7 2" stroke="#1A9A40" fill="none" stroke-width="1.3"/><rect x="4.5" y="4.5" width="8" height="8" fill="#D8F8E8" stroke="#0E3A2A"/><path d="M6 8 L8 10 L11 6" stroke="#1A9A40" fill="none" stroke-width="1.3"/><rect x="8.5" y="8.5" width="8" height="8" fill="#D8F8E8" stroke="#0E3A2A"/><path d="M10 12 L12 14 L15 10" stroke="#1A9A40" fill="none" stroke-width="1.3"/></svg>
<div class="a" style="left:9px;top:270px;width:238px;height:1px;background:#C5C2B2"></div>
<div class="a" style="left:9px;top:271px;width:238px;height:1px;background:#fff"></div>
<div class="t" style="left:9px;top:280px;">Направление :</div>
<div class="a" style="left:9px;top:295px;width:238px;height:21px;background:#fff;border:1px solid #8496A8"></div><div class="t" style="left:12px;top:300px;">Вывоз груза</div>
<div class="a" style="left:230px;top:298px;width:15px;height:15px;background:linear-gradient(135deg,#D2DEFB,#B6CAF6);border-radius:1px"></div><svg class="a" style="left:230px;top:298px" width="15" height="15"><path d="M3.5 5.5 L7.5 9.5 L11.5 5.5" stroke="#4D6185" stroke-width="2" fill="none"/></svg>
<div class="t" style="left:9px;top:322px;">Владелец автотранспорта :</div>
<div class="a" style="left:9px;top:337px;width:203px;height:21px;background:#fff;border:1px solid #8496A8"></div><div class="t" style="left:12px;top:342px;">Все владельцы автотранспорта</div>
<div class="a" style="left:191px;top:339px;width:19px;height:17px;background:linear-gradient(#E6EEFF,#B8CCF4);border:2px solid #2A3E70;border-radius:4px"></div><svg class="a" style="left:191px;top:339px" width="19" height="17"><path d="M4 8 V13 H14 L16 8 Z" fill="#6A86D8" stroke="#2A3E70"/><path d="M4 8 V6 H8 L9 7 H12 V8" fill="none" stroke="#2A3E70"/><path d="M9 4 Q12 2 14 5" stroke="#2A3E70" fill="none" stroke-width="1.2"/><path d="M13 4 L15 6 L14 3Z" fill="#2A3E70"/></svg>
<div class="a" style="left:219px;top:332px;width:28px;height:27px;background:linear-gradient(#FFFFFF,#F2F1EA 70%,#E2DFD2);border-radius:3px;border:1px solid #E0DDD0"></div><svg class="a" style="left:225px;top:337px" width="18" height="18"><rect x="0.5" y="0.5" width="8" height="8" fill="#D8F8E8" stroke="#0E3A2A"/><path d="M2 4 L4 6 L7 2" stroke="#1A9A40" fill="none" stroke-width="1.3"/><rect x="4.5" y="4.5" width="8" height="8" fill="#D8F8E8" stroke="#0E3A2A"/><path d="M6 8 L8 10 L11 6" stroke="#1A9A40" fill="none" stroke-width="1.3"/><rect x="8.5" y="8.5" width="8" height="8" fill="#D8F8E8" stroke="#0E3A2A"/><path d="M10 12 L12 14 L15 10" stroke="#1A9A40" fill="none" stroke-width="1.3"/></svg>
<div class="t" style="left:9px;top:362px;">Организация :</div>
<div class="a" style="left:9px;top:377px;width:203px;height:21px;background:#fff;border:1px solid #8496A8"></div><div class="t" style="left:12px;top:382px;">Все организации</div>
<div class="a" style="left:191px;top:379px;width:19px;height:17px;background:linear-gradient(#E6EEFF,#B8CCF4);border:2px solid #2A3E70;border-radius:4px"></div><svg class="a" style="left:191px;top:379px" width="19" height="17"><path d="M4 8 V13 H14 L16 8 Z" fill="#6A86D8" stroke="#2A3E70"/><path d="M4 8 V6 H8 L9 7 H12 V8" fill="none" stroke="#2A3E70"/><path d="M9 4 Q12 2 14 5" stroke="#2A3E70" fill="none" stroke-width="1.2"/><path d="M13 4 L15 6 L14 3Z" fill="#2A3E70"/></svg>
<div class="a" style="left:219px;top:373px;width:28px;height:27px;background:linear-gradient(#FFFFFF,#F2F1EA 70%,#E2DFD2);border-radius:3px;border:1px solid #E0DDD0"></div><svg class="a" style="left:225px;top:378px" width="18" height="18"><rect x="0.5" y="0.5" width="8" height="8" fill="#D8F8E8" stroke="#0E3A2A"/><path d="M2 4 L4 6 L7 2" stroke="#1A9A40" fill="none" stroke-width="1.3"/><rect x="4.5" y="4.5" width="8" height="8" fill="#D8F8E8" stroke="#0E3A2A"/><path d="M6 8 L8 10 L11 6" stroke="#1A9A40" fill="none" stroke-width="1.3"/><rect x="8.5" y="8.5" width="8" height="8" fill="#D8F8E8" stroke="#0E3A2A"/><path d="M10 12 L12 14 L15 10" stroke="#1A9A40" fill="none" stroke-width="1.3"/></svg>
<div class="a" style="left:4px;top:394px;width:900px;height:19px;background:#ECE9D8;border-top:1px solid #C5C2B2"></div>
<div class="t" style="left:9px;top:399px;">Количество записей: 1561</div>
<div class="a" style="left:900px;top:401px;width:2px;height:2px;background:#B8B5A6"></div>
<div class="a" style="left:896px;top:405px;width:2px;height:2px;background:#B8B5A6"></div>
<div class="a" style="left:900px;top:405px;width:2px;height:2px;background:#B8B5A6"></div>
<div class="a" style="left:892px;top:409px;width:2px;height:2px;background:#B8B5A6"></div>
<div class="a" style="left:896px;top:409px;width:2px;height:2px;background:#B8B5A6"></div>
<div class="a" style="left:900px;top:409px;width:2px;height:2px;background:#B8B5A6"></div>
<div class="a" style="left:253px;top:63px;width:651px;height:331px;background:#fff;border:1px solid #8E8F8F;border-right-color:#F4F4F4"></div>
<div class="a" style="left:254px;top:64px;width:649px;height:329px;overflow:hidden"><div class="a" style="left:0px;top:0px;width:640px;height:18px;background:linear-gradient(#F2F1E8,#EBEADB 80%,#E2DFCF)"></div><div class="a" style="left:0px;top:0px;width:12px;height:306px;background:#EBEADB"></div><div class="a" style="left:0px;top:17px;width:640px;height:1px;background:#D6D2BE"></div><div class="a" style="left:12px;top:2px;width:1px;height:14px;background:#D0CCB8"></div><div class="a" style="left:69px;top:2px;width:1px;height:14px;background:#D0CCB8"></div><div class="a" style="left:163px;top:2px;width:1px;height:14px;background:#D0CCB8"></div><div class="a" style="left:251px;top:2px;width:1px;height:14px;background:#D0CCB8"></div><div class="a" style="left:346px;top:2px;width:1px;height:14px;background:#D0CCB8"></div><div class="a" style="left:393px;top:2px;width:1px;height:14px;background:#D0CCB8"></div><div class="a" style="left:435px;top:2px;width:1px;height:14px;background:#D0CCB8"></div><div class="a" style="left:480px;top:2px;width:1px;height:14px;background:#D0CCB8"></div><div class="a" style="left:542px;top:2px;width:1px;height:14px;background:#D0CCB8"></div><div class="a" style="left:613px;top:2px;width:1px;height:14px;background:#D0CCB8"></div><div class="t" style="left:13px;top:4px;transform:scaleX(0.9);transform-origin:0 0">Номер ТС</div><div class="t" style="left:73px;top:4px;">Время</div><div class="t" style="left:165px;top:4px;">Продукция</div><div class="t" style="left:253px;top:4px;">Владелец ТС</div><div class="t" style="left:348px;top:4px;">Брутто</div><div class="t" style="left:395px;top:4px;">Тара</div><div class="t" style="left:437px;top:4px;">Нетто</div><div class="t" style="left:482px;top:4px;">Стоимость</div><div class="t" style="left:544px;top:4px;">Направление</div><div class="t" style="left:615px;top:4px;">Организация</div><div class="a" style="left:12px;top:19px;width:640px;height:17px;background:#316AC5"></div><svg class="a" style="left:5px;top:22px" width="6" height="10"><path d="M0 0 L5 5 L0 10Z" fill="#000"/></svg><div class="a" style="left:12px;top:19px;width:57px;height:17px;border:1px dotted #A8C0F0"></div><div class="a" style="left:12px;top:36px;width:640px;height:1px;background:#D0CDC6"></div><div class="t" style="left:15px;top:22px;color:#D0F4FF;transform:scaleX(0.92);transform-origin:0 0;">0805КМ</div><div class="t" style="left:73px;top:22px;color:#D0F4FF;letter-spacing:0.1px;">30.10.2008 18:16</div><div class="t" style="left:165px;top:22px;color:#D0F4FF;transform:scaleX(0.94);transform-origin:0 0;">3 КАРТА ПЕСОК</div><div class="t" style="left:253px;top:22px;color:#D0F4FF;transform:scaleX(0.92);transform-origin:0 0;">АДМИНИСТРАЦИЯ</div><div class="t" style="left:346px;top:22px;width:43px;text-align:right;color:#D0F4FF;letter-spacing:0.2px">14,00 т</div><div class="t" style="left:393px;top:22px;width:38px;text-align:right;color:#D0F4FF;letter-spacing:0.2px">8,68 т</div><div class="t" style="left:435px;top:22px;width:41px;text-align:right;color:#D0F4FF;letter-spacing:0.2px">5,32 т</div><div class="t" style="left:480px;top:22px;width:58px;text-align:right;color:#D0F4FF;letter-spacing:0.2px">0,00 руб</div><div class="t" style="left:542px;top:22px;width:67px;text-align:right;color:#D0F4FF;letter-spacing:0">Вывоз</div><div class="t" style="left:615px;top:22px;color:#D0F4FF;">АТП</div><div class="a" style="left:12px;top:54px;width:640px;height:1px;background:#D0CDC6"></div><div class="t" style="left:15px;top:40px;color:#000;transform:scaleX(0.92);transform-origin:0 0;">А455ММ</div><div class="t" style="left:73px;top:40px;color:#000;letter-spacing:0.1px;">28.02.2008 10:55</div><div class="t" style="left:165px;top:40px;color:#000;transform:scaleX(0.94);transform-origin:0 0;">2 КОНУС ПЕСОК</div><div class="t" style="left:253px;top:40px;color:#000;transform:scaleX(0.92);transform-origin:0 0;">АДМИНИСТРАЦИЯ</div><div class="t" style="left:346px;top:40px;width:43px;text-align:right;color:#000;letter-spacing:0.2px">18,78 т</div><div class="t" style="left:393px;top:40px;width:38px;text-align:right;color:#000;letter-spacing:0.2px">9,60 т</div><div class="t" style="left:435px;top:40px;width:41px;text-align:right;color:#000;letter-spacing:0.2px">9,18 т</div><div class="t" style="left:480px;top:40px;width:58px;text-align:right;color:#000;letter-spacing:0.2px">0,00 руб</div><div class="t" style="left:542px;top:40px;width:67px;text-align:right;color:#000;letter-spacing:0">Вывоз</div><div class="t" style="left:615px;top:40px;color:#000;">НСО</div><div class="a" style="left:12px;top:72px;width:640px;height:1px;background:#D0CDC6"></div><div class="t" style="left:15px;top:58px;color:#000;transform:scaleX(0.92);transform-origin:0 0;">А455ММ</div><div class="t" style="left:73px;top:58px;color:#000;letter-spacing:0.1px;">29.02.2008 09:17</div><div class="t" style="left:165px;top:58px;color:#000;transform:scaleX(0.94);transform-origin:0 0;">2 КОНУС ПЕСОК</div><div class="t" style="left:253px;top:58px;color:#000;transform:scaleX(0.92);transform-origin:0 0;">АДМИНИСТРАЦИЯ</div><div class="t" style="left:346px;top:58px;width:43px;text-align:right;color:#000;letter-spacing:0.2px">19,34 т</div><div class="t" style="left:393px;top:58px;width:38px;text-align:right;color:#000;letter-spacing:0.2px">9,60 т</div><div class="t" style="left:435px;top:58px;width:41px;text-align:right;color:#000;letter-spacing:0.2px">9,74 т</div><div class="t" style="left:480px;top:58px;width:58px;text-align:right;color:#000;letter-spacing:0.2px">0,00 руб</div><div class="t" style="left:542px;top:58px;width:67px;text-align:right;color:#000;letter-spacing:0">Вывоз</div><div class="t" style="left:615px;top:58px;color:#000;">НСО</div><div class="a" style="left:12px;top:90px;width:640px;height:1px;background:#D0CDC6"></div><div class="t" style="left:15px;top:76px;color:#000;transform:scaleX(0.92);transform-origin:0 0;">А455ММ</div><div class="t" style="left:73px;top:76px;color:#000;letter-spacing:0.1px;">29.02.2008 11:55</div><div class="t" style="left:165px;top:76px;color:#000;transform:scaleX(0.94);transform-origin:0 0;">2 КОНУС ПЕСОК</div><div class="t" style="left:253px;top:76px;color:#000;transform:scaleX(0.92);transform-origin:0 0;">АДМИНИСТРАЦИЯ</div><div class="t" style="left:346px;top:76px;width:43px;text-align:right;color:#000;letter-spacing:0.2px">19,42 т</div><div class="t" style="left:393px;top:76px;width:38px;text-align:right;color:#000;letter-spacing:0.2px">9,60 т</div><div class="t" style="left:435px;top:76px;width:41px;text-align:right;color:#000;letter-spacing:0.2px">9,82 т</div><div class="t" style="left:480px;top:76px;width:58px;text-align:right;color:#000;letter-spacing:0.2px">0,00 руб</div><div class="t" style="left:542px;top:76px;width:67px;text-align:right;color:#000;letter-spacing:0">Вывоз</div><div class="t" style="left:615px;top:76px;color:#000;">НСО</div><div class="a" style="left:12px;top:108px;width:640px;height:1px;background:#D0CDC6"></div><div class="t" style="left:15px;top:94px;color:#000;transform:scaleX(0.92);transform-origin:0 0;">А455ММ</div><div class="t" style="left:73px;top:94px;color:#000;letter-spacing:0.1px;">29.02.2008 14:36</div><div class="t" style="left:165px;top:94px;color:#000;transform:scaleX(0.94);transform-origin:0 0;">2 КОНУС ПЕСОК</div><div class="t" style="left:253px;top:94px;color:#000;transform:scaleX(0.92);transform-origin:0 0;">АДМИНИСТРАЦИЯ</div><div class="t" style="left:346px;top:94px;width:43px;text-align:right;color:#000;letter-spacing:0.2px">20,88 т</div><div class="t" style="left:393px;top:94px;width:38px;text-align:right;color:#000;letter-spacing:0.2px">9,60 т</div><div class="t" style="left:435px;top:94px;width:41px;text-align:right;color:#000;letter-spacing:0.2px">11,28 т</div><div class="t" style="left:480px;top:94px;width:58px;text-align:right;color:#000;letter-spacing:0.2px">0,00 руб</div><div class="t" style="left:542px;top:94px;width:67px;text-align:right;color:#000;letter-spacing:0">Вывоз</div><div class="t" style="left:615px;top:94px;color:#000;">НСО</div><div class="a" style="left:12px;top:126px;width:640px;height:1px;background:#D0CDC6"></div><div class="t" style="left:15px;top:112px;color:#000;transform:scaleX(0.92);transform-origin:0 0;">А849НК</div><div class="t" style="left:73px;top:112px;color:#000;letter-spacing:0.1px;">29.02.2008 10:39</div><div class="t" style="left:165px;top:112px;color:#000;">ПГС (гидрики)</div><div class="t" style="left:253px;top:112px;color:#000;transform:scaleX(0.92);transform-origin:0 0;">АДМИНИСТРАЦИЯ</div><div class="t" style="left:346px;top:112px;width:43px;text-align:right;color:#000;letter-spacing:0.2px">9,98 т</div><div class="t" style="left:393px;top:112px;width:38px;text-align:right;color:#000;letter-spacing:0.2px">4,90 т</div><div class="t" style="left:435px;top:112px;width:41px;text-align:right;color:#000;letter-spacing:0.2px">5,08 т</div><div class="t" style="left:480px;top:112px;width:58px;text-align:right;color:#000;letter-spacing:0.2px">0,00 руб</div><div class="t" style="left:542px;top:112px;width:67px;text-align:right;color:#000;letter-spacing:0">Вывоз</div><div class="t" style="left:615px;top:112px;color:#000;">ЧЕМ</div><div class="a" style="left:12px;top:144px;width:640px;height:1px;background:#D0CDC6"></div><div class="t" style="left:15px;top:130px;color:#000;transform:scaleX(0.92);transform-origin:0 0;">А849НК</div><div class="t" style="left:73px;top:130px;color:#000;letter-spacing:0.1px;">01.03.2008 10:55</div><div class="t" style="left:165px;top:130px;color:#000;">ПГС (гидрики)</div><div class="t" style="left:253px;top:130px;color:#000;transform:scaleX(0.92);transform-origin:0 0;">АДМИНИСТРАЦИЯ</div><div class="t" style="left:346px;top:130px;width:43px;text-align:right;color:#000;letter-spacing:0.2px">9,46 т</div><div class="t" style="left:393px;top:130px;width:38px;text-align:right;color:#000;letter-spacing:0.2px">4,90 т</div><div class="t" style="left:435px;top:130px;width:41px;text-align:right;color:#000;letter-spacing:0.2px">4,56 т</div><div class="t" style="left:480px;top:130px;width:58px;text-align:right;color:#000;letter-spacing:0.2px">0,00 руб</div><div class="t" style="left:542px;top:130px;width:67px;text-align:right;color:#000;letter-spacing:0">Вывоз</div><div class="t" style="left:615px;top:130px;color:#000;">ЧЕМ</div><div class="a" style="left:12px;top:162px;width:640px;height:1px;background:#D0CDC6"></div><div class="t" style="left:15px;top:148px;color:#000;transform:scaleX(0.92);transform-origin:0 0;">А849НК</div><div class="t" style="left:73px;top:148px;color:#000;letter-spacing:0.1px;">01.03.2008 13:15</div><div class="t" style="left:165px;top:148px;color:#000;">ПГС (гидрики)</div><div class="t" style="left:253px;top:148px;color:#000;transform:scaleX(0.92);transform-origin:0 0;">АДМИНИСТРАЦИЯ</div><div class="t" style="left:346px;top:148px;width:43px;text-align:right;color:#000;letter-spacing:0.2px">10,98 т</div><div class="t" style="left:393px;top:148px;width:38px;text-align:right;color:#000;letter-spacing:0.2px">4,90 т</div><div class="t" style="left:435px;top:148px;width:41px;text-align:right;color:#000;letter-spacing:0.2px">6,08 т</div><div class="t" style="left:480px;top:148px;width:58px;text-align:right;color:#000;letter-spacing:0.2px">0,00 руб</div><div class="t" style="left:542px;top:148px;width:67px;text-align:right;color:#000;letter-spacing:0">Вывоз</div><div class="t" style="left:615px;top:148px;color:#000;">ЧЕМ</div><div class="a" style="left:12px;top:180px;width:640px;height:1px;background:#D0CDC6"></div><div class="t" style="left:15px;top:166px;color:#000;transform:scaleX(0.92);transform-origin:0 0;">А849НК</div><div class="t" style="left:73px;top:166px;color:#000;letter-spacing:0.1px;">01.03.2008 14:42</div><div class="t" style="left:165px;top:166px;color:#000;">ПГС (гидрики)</div><div class="t" style="left:253px;top:166px;color:#000;transform:scaleX(0.92);transform-origin:0 0;">АДМИНИСТРАЦИЯ</div><div class="t" style="left:346px;top:166px;width:43px;text-align:right;color:#000;letter-spacing:0.2px">10,50 т</div><div class="t" style="left:393px;top:166px;width:38px;text-align:right;color:#000;letter-spacing:0.2px">4,90 т</div><div class="t" style="left:435px;top:166px;width:41px;text-align:right;color:#000;letter-spacing:0.2px">5,60 т</div><div class="t" style="left:480px;top:166px;width:58px;text-align:right;color:#000;letter-spacing:0.2px">0,00 руб</div><div class="t" style="left:542px;top:166px;width:67px;text-align:right;color:#000;letter-spacing:0">Вывоз</div><div class="t" style="left:615px;top:166px;color:#000;">ЧЕМ</div><div class="a" style="left:12px;top:198px;width:640px;height:1px;background:#D0CDC6"></div><div class="t" style="left:15px;top:184px;color:#000;transform:scaleX(0.92);transform-origin:0 0;">А928КО</div><div class="t" style="left:73px;top:184px;color:#000;letter-spacing:0.1px;">29.02.2008 08:50</div><div class="t" style="left:165px;top:184px;color:#000;">ПГС (гидрики)</div><div class="t" style="left:253px;top:184px;color:#000;transform:scaleX(0.92);transform-origin:0 0;">АДМИНИСТРАЦИЯ</div><div class="t" style="left:346px;top:184px;width:43px;text-align:right;color:#000;letter-spacing:0.2px">28,96 т</div><div class="t" style="left:393px;top:184px;width:38px;text-align:right;color:#000;letter-spacing:0.2px">5,38 т</div><div class="t" style="left:435px;top:184px;width:41px;text-align:right;color:#000;letter-spacing:0.2px">0,00 т</div><div class="t" style="left:480px;top:184px;width:58px;text-align:right;color:#000;letter-spacing:0.2px">0,00 руб</div><div class="t" style="left:542px;top:184px;width:67px;text-align:right;color:#000;letter-spacing:0">Вывоз</div><div class="t" style="left:615px;top:184px;color:#000;">TEF</div><div class="a" style="left:12px;top:216px;width:640px;height:1px;background:#D0CDC6"></div><div class="t" style="left:15px;top:202px;color:#000;transform:scaleX(0.92);transform-origin:0 0;">А928НА</div><div class="t" style="left:73px;top:202px;color:#000;letter-spacing:0.1px;">28.02.2008 16:04</div><div class="t" style="left:165px;top:202px;color:#000;">ПГС (гидрики)</div><div class="t" style="left:253px;top:202px;color:#000;transform:scaleX(0.92);transform-origin:0 0;">АДМИНИСТРАЦИЯ</div><div class="t" style="left:346px;top:202px;width:43px;text-align:right;color:#000;letter-spacing:0.2px">23,16 т</div><div class="t" style="left:393px;top:202px;width:38px;text-align:right;color:#000;letter-spacing:0.2px">10,38 т</div><div class="t" style="left:435px;top:202px;width:41px;text-align:right;color:#000;letter-spacing:0.2px">12,78 т</div><div class="t" style="left:480px;top:202px;width:58px;text-align:right;color:#000;letter-spacing:0.2px">0,00 руб</div><div class="t" style="left:542px;top:202px;width:67px;text-align:right;color:#000;letter-spacing:0">Вывоз</div><div class="t" style="left:615px;top:202px;color:#000;">TEF</div><div class="a" style="left:12px;top:234px;width:640px;height:1px;background:#D0CDC6"></div><div class="t" style="left:15px;top:220px;color:#000;transform:scaleX(0.92);transform-origin:0 0;">А928НА</div><div class="t" style="left:73px;top:220px;color:#000;letter-spacing:0.1px;">29.02.2008 08:51</div><div class="t" style="left:165px;top:220px;color:#000;">ПГС (гидрики)</div><div class="t" style="left:253px;top:220px;color:#000;transform:scaleX(0.92);transform-origin:0 0;">АДМИНИСТРАЦИЯ</div><div class="t" style="left:346px;top:220px;width:43px;text-align:right;color:#000;letter-spacing:0.2px">28,94 т</div><div class="t" style="left:393px;top:220px;width:38px;text-align:right;color:#000;letter-spacing:0.2px">10,38 т</div><div class="t" style="left:435px;top:220px;width:41px;text-align:right;color:#000;letter-spacing:0.2px">18,56 т</div><div class="t" style="left:480px;top:220px;width:58px;text-align:right;color:#000;letter-spacing:0.2px">0,00 руб</div><div class="t" style="left:542px;top:220px;width:67px;text-align:right;color:#000;letter-spacing:0">Вывоз</div><div class="t" style="left:615px;top:220px;color:#000;">TEF</div><div class="a" style="left:12px;top:252px;width:640px;height:1px;background:#D0CDC6"></div><div class="t" style="left:15px;top:238px;color:#000;transform:scaleX(0.92);transform-origin:0 0;">А928НА</div><div class="t" style="left:73px;top:238px;color:#000;letter-spacing:0.1px;">29.02.2008 10:34</div><div class="t" style="left:165px;top:238px;color:#000;">ПГС (гидрики)</div><div class="t" style="left:253px;top:238px;color:#000;transform:scaleX(0.92);transform-origin:0 0;">АДМИНИСТРАЦИЯ</div><div class="t" style="left:346px;top:238px;width:43px;text-align:right;color:#000;letter-spacing:0.2px">22,98 т</div><div class="t" style="left:393px;top:238px;width:38px;text-align:right;color:#000;letter-spacing:0.2px">10,38 т</div><div class="t" style="left:435px;top:238px;width:41px;text-align:right;color:#000;letter-spacing:0.2px">12,60 т</div><div class="t" style="left:480px;top:238px;width:58px;text-align:right;color:#000;letter-spacing:0.2px">0,00 руб</div><div class="t" style="left:542px;top:238px;width:67px;text-align:right;color:#000;letter-spacing:0">Вывоз</div><div class="t" style="left:615px;top:238px;color:#000;">TEF</div><div class="a" style="left:12px;top:270px;width:640px;height:1px;background:#D0CDC6"></div><div class="t" style="left:15px;top:256px;color:#000;transform:scaleX(0.92);transform-origin:0 0;">А928НА</div><div class="t" style="left:73px;top:256px;color:#000;letter-spacing:0.1px;">29.02.2008 12:11</div><div class="t" style="left:165px;top:256px;color:#000;">ПГС (гидрики)</div><div class="t" style="left:253px;top:256px;color:#000;transform:scaleX(0.92);transform-origin:0 0;">АДМИНИСТРАЦИЯ</div><div class="t" style="left:346px;top:256px;width:43px;text-align:right;color:#000;letter-spacing:0.2px">29,38 т</div><div class="t" style="left:393px;top:256px;width:38px;text-align:right;color:#000;letter-spacing:0.2px">10,38 т</div><div class="t" style="left:435px;top:256px;width:41px;text-align:right;color:#000;letter-spacing:0.2px">19,00 т</div><div class="t" style="left:480px;top:256px;width:58px;text-align:right;color:#000;letter-spacing:0.2px">0,00 руб</div><div class="t" style="left:542px;top:256px;width:67px;text-align:right;color:#000;letter-spacing:0">Вывоз</div><div class="t" style="left:615px;top:256px;color:#000;">TEF</div><div class="a" style="left:12px;top:288px;width:640px;height:1px;background:#D0CDC6"></div><div class="t" style="left:15px;top:274px;color:#000;transform:scaleX(0.92);transform-origin:0 0;">А928НА</div><div class="t" style="left:73px;top:274px;color:#000;letter-spacing:0.1px;">29.02.2008 16:34</div><div class="t" style="left:165px;top:274px;color:#000;">ПГС (гидрики)</div><div class="t" style="left:253px;top:274px;color:#000;transform:scaleX(0.92);transform-origin:0 0;">АДМИНИСТРАЦИЯ</div><div class="t" style="left:346px;top:274px;width:43px;text-align:right;color:#000;letter-spacing:0.2px">24,66 т</div><div class="t" style="left:393px;top:274px;width:38px;text-align:right;color:#000;letter-spacing:0.2px">10,38 т</div><div class="t" style="left:435px;top:274px;width:41px;text-align:right;color:#000;letter-spacing:0.2px">14,28 т</div><div class="t" style="left:480px;top:274px;width:58px;text-align:right;color:#000;letter-spacing:0.2px">0,00 руб</div><div class="t" style="left:542px;top:274px;width:67px;text-align:right;color:#000;letter-spacing:0">Вывоз</div><div class="t" style="left:615px;top:274px;color:#000;">TEF</div><div class="a" style="left:12px;top:306px;width:640px;height:1px;background:#D0CDC6"></div><div class="t" style="left:15px;top:292px;color:#000;transform:scaleX(0.92);transform-origin:0 0;">А928НА</div><div class="t" style="left:73px;top:292px;color:#000;letter-spacing:0.1px;">01.03.2008 10:08</div><div class="t" style="left:165px;top:292px;color:#000;">ПГС (гидрики)</div><div class="t" style="left:253px;top:292px;color:#000;transform:scaleX(0.92);transform-origin:0 0;">АДМИНИСТРАЦИЯ</div><div class="t" style="left:346px;top:292px;width:43px;text-align:right;color:#000;letter-spacing:0.2px">24,78 т</div><div class="t" style="left:393px;top:292px;width:38px;text-align:right;color:#000;letter-spacing:0.2px">10,38 т</div><div class="t" style="left:435px;top:292px;width:41px;text-align:right;color:#000;letter-spacing:0.2px">14,40 т</div><div class="t" style="left:480px;top:292px;width:58px;text-align:right;color:#000;letter-spacing:0.2px">0,00 руб</div><div class="t" style="left:542px;top:292px;width:67px;text-align:right;color:#000;letter-spacing:0">Вывоз</div><div class="t" style="left:615px;top:292px;color:#000;">TEF</div><div class="a" style="left:69px;top:18px;width:1px;height:288px;background:#D0CDC6"></div><div class="a" style="left:69px;top:19px;width:1px;height:17px;background:#98B4EA"></div><div class="a" style="left:163px;top:18px;width:1px;height:288px;background:#D0CDC6"></div><div class="a" style="left:163px;top:19px;width:1px;height:17px;background:#98B4EA"></div><div class="a" style="left:251px;top:18px;width:1px;height:288px;background:#D0CDC6"></div><div class="a" style="left:251px;top:19px;width:1px;height:17px;background:#98B4EA"></div><div class="a" style="left:346px;top:18px;width:1px;height:288px;background:#D0CDC6"></div><div class="a" style="left:346px;top:19px;width:1px;height:17px;background:#98B4EA"></div><div class="a" style="left:393px;top:18px;width:1px;height:288px;background:#D0CDC6"></div><div class="a" style="left:393px;top:19px;width:1px;height:17px;background:#98B4EA"></div><div class="a" style="left:435px;top:18px;width:1px;height:288px;background:#D0CDC6"></div><div class="a" style="left:435px;top:19px;width:1px;height:17px;background:#98B4EA"></div><div class="a" style="left:480px;top:18px;width:1px;height:288px;background:#D0CDC6"></div><div class="a" style="left:480px;top:19px;width:1px;height:17px;background:#98B4EA"></div><div class="a" style="left:542px;top:18px;width:1px;height:288px;background:#D0CDC6"></div><div class="a" style="left:542px;top:19px;width:1px;height:17px;background:#98B4EA"></div><div class="a" style="left:613px;top:18px;width:1px;height:288px;background:#D0CDC6"></div><div class="a" style="left:613px;top:19px;width:1px;height:17px;background:#98B4EA"></div><div class="a" style="left:632px;top:0px;width:17px;height:312px;background:linear-gradient(to right,#F3F1EC,#FEFEFB)"></div><div class="a" style="left:632px;top:1px;width:16px;height:17px;background:linear-gradient(135deg,#E0E8FE,#BACEF8);border:1px solid #C8D6F8;border-radius:2px"></div><svg class="a" style="left:632px;top:1px" width="16" height="17"><path d="M4 10 L8 6 L12 10" stroke="#4D6185" stroke-width="2" fill="none"/></svg><div class="a" style="left:632px;top:19px;width:16px;height:8px;background:linear-gradient(to right,#C8D8FA,#B8CCF6);border:1px solid #E0E8FE;border-radius:2px"></div><div class="a" style="left:632px;top:295px;width:16px;height:16px;background:linear-gradient(135deg,#E0E8FE,#BACEF8);border:1px solid #C8D6F8;border-radius:2px"></div><svg class="a" style="left:632px;top:295px" width="16" height="16"><path d="M4 6 L8 10 L12 6" stroke="#4D6185" stroke-width="2" fill="none"/></svg><div class="a" style="left:0px;top:312px;width:632px;height:17px;background:linear-gradient(#F3F1EC,#FEFEFB)"></div><div class="a" style="left:1px;top:313px;width:16px;height:15px;background:linear-gradient(135deg,#E0E8FE,#BACEF8);border:1px solid #C8D6F8;border-radius:2px"></div><svg class="a" style="left:1px;top:313px" width="16" height="15"><path d="M10 3.5 L6 7.5 L10 11.5" stroke="#4D6185" stroke-width="2" fill="none"/></svg><div class="a" style="left:19px;top:313px;width:16px;height:15px;background:linear-gradient(#C8D8FA,#B8CCF6);border:1px solid #E0E8FE;border-radius:2px"></div><div class="a" style="left:24px;top:317px;width:1px;height:7px;background:#EEF4FF;box-shadow:2px 0 0 #EEF4FF,4px 0 0 #EEF4FF,6px 0 0 #EEF4FF"></div><div class="a" style="left:614px;top:313px;width:16px;height:15px;background:linear-gradient(135deg,#E0E8FE,#BACEF8);border:1px solid #C8D6F8;border-radius:2px"></div><svg class="a" style="left:614px;top:313px" width="16" height="15"><path d="M6 3.5 L10 7.5 L6 11.5" stroke="#4D6185" stroke-width="2" fill="none"/></svg><div class="a" style="left:632px;top:312px;width:17px;height:17px;background:#ECE9D8"></div></div>
</div>
</body></html>
